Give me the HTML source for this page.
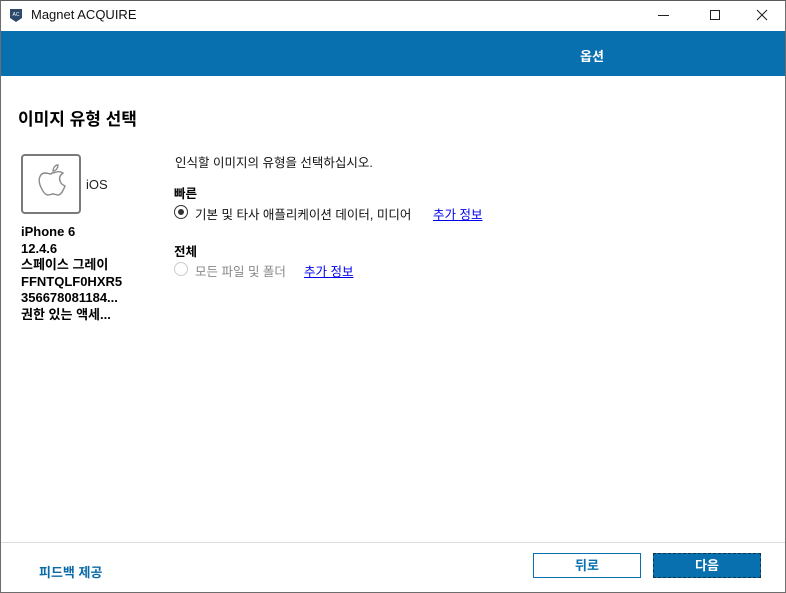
<!DOCTYPE html>
<html><head><meta charset="utf-8"><style>
*{margin:0;padding:0;box-sizing:border-box}
body{width:786px;height:593px;overflow:hidden;background:#fff;font-family:"Liberation Sans","Noto Sans CJK KR",sans-serif;color:#000;position:relative}
.frame{position:absolute;inset:0;border:1px solid #6d6d6d;border-top-color:#5a5a5a}
.a{position:absolute;white-space:nowrap}
.hdr{position:absolute;left:1px;right:1px;top:31px;height:45px;background:#0970b0}
.btn{position:absolute;top:553px;height:25px;width:108px;font-size:13px;font-weight:bold;text-align:center;line-height:23px}
a{color:#0000ee;text-decoration:underline}
</style></head><body>
<div class="frame"></div>
<svg class="a" style="left:9px;top:8px" width="14" height="15" viewBox="0 0 14 15"><path d="M1 1h12v9l-6 4-6-4z" fill="#2d4a6a"/><text x="7" y="8" font-size="5" fill="#fff" text-anchor="middle" font-family="Liberation Sans">AC</text></svg>
<div class="a" style="left:31px;top:7px;font-size:13px;color:#111">Magnet ACQUIRE</div>
<div class="a" style="left:658px;top:15px;width:11px;height:1px;background:#222"></div>
<div class="a" style="left:710px;top:10px;width:10px;height:10px;border:1px solid #222"></div>
<svg class="a" style="left:756px;top:9px" width="12" height="12"><path d="M1 1L11 11M11 1L1 11" stroke="#222" stroke-width="1.1"/></svg>
<div class="hdr"></div>
<div class="a" style="left:580px;top:46px;font-size:13px;font-weight:bold;color:#fff">옵션</div>
<div class="a" style="left:18px;top:105px;font-size:17px;font-weight:bold">이미지 유형 선택</div>
<div class="a" style="left:21px;top:154px;width:60px;height:60px;border:2px solid #7a7a7a;border-radius:4px"></div>
<svg class="a" style="left:33px;top:163px" width="38" height="42" viewBox="0 0 38 42"><path d="M19 10c3-0 7-3 11 0c-3 2-4 5-3 8c1 3 3 4 5 5c-2 5-4 9-7 9c-2 0-3-1-5-1c-2 0-3 1-5 1c-3 0-6-5-8-10c-2-6 0-12 5-12c3 0 4 1 6 1zM20 8c0-3 2-6 5-6c0 3-2 6-5 6z" fill="none" stroke="#8a8a8a" stroke-width="1.4"/></svg>
<div class="a" style="left:86px;top:177px;font-size:13px;color:#222">iOS</div>
<div class="a" style="left:21px;top:224px;font-size:13px;font-weight:bold;line-height:16.5px">iPhone 6<br>12.4.6<br>스페이스 그레이<br>FFNTQLF0HXR5<br>356678081184...<br>권한 있는 액세...</div>
<div class="a" style="left:175px;top:152px;font-size:12.5px;color:#111">인식할 이미지의 유형을 선택하십시오.</div>
<div class="a" style="left:174px;top:183px;font-size:12.5px;font-weight:bold">빠른</div>
<div class="a" style="left:174px;top:205px;width:14px;height:14px;border:1px solid #333;border-radius:50%"></div>
<div class="a" style="left:178px;top:209px;width:6px;height:6px;background:#333;border-radius:50%"></div>
<div class="a" style="left:195px;top:204px;font-size:12.5px;color:#111">기본 및 타사 애플리케이션 데이터, 미디어</div>
<div class="a" style="left:433px;top:204px;font-size:12.5px"><a>추가 정보</a></div>
<div class="a" style="left:174px;top:241px;font-size:12.5px;font-weight:bold">전체</div>
<div class="a" style="left:174px;top:262px;width:14px;height:14px;border:1px solid #ccc;border-radius:50%"></div>
<div class="a" style="left:195px;top:261px;font-size:12.5px;color:#888">모든 파일 및 폴더</div>
<div class="a" style="left:304px;top:261px;font-size:12.5px"><a>추가 정보</a></div>
<div class="a" style="left:1px;right:1px;top:542px;height:1px;background:#ddd"></div>
<div class="a" style="left:39px;top:562px;font-size:13px;font-weight:bold;color:#0a6aa8">피드백 제공</div>
<div class="btn" style="left:533px;border:1px solid #0970b0;color:#0970b0;background:#fff">뒤로</div>
<div class="btn" style="left:653px;background:#0970b0;color:#fff;border:1px dashed #0b3550">다음</div>
</body></html>
